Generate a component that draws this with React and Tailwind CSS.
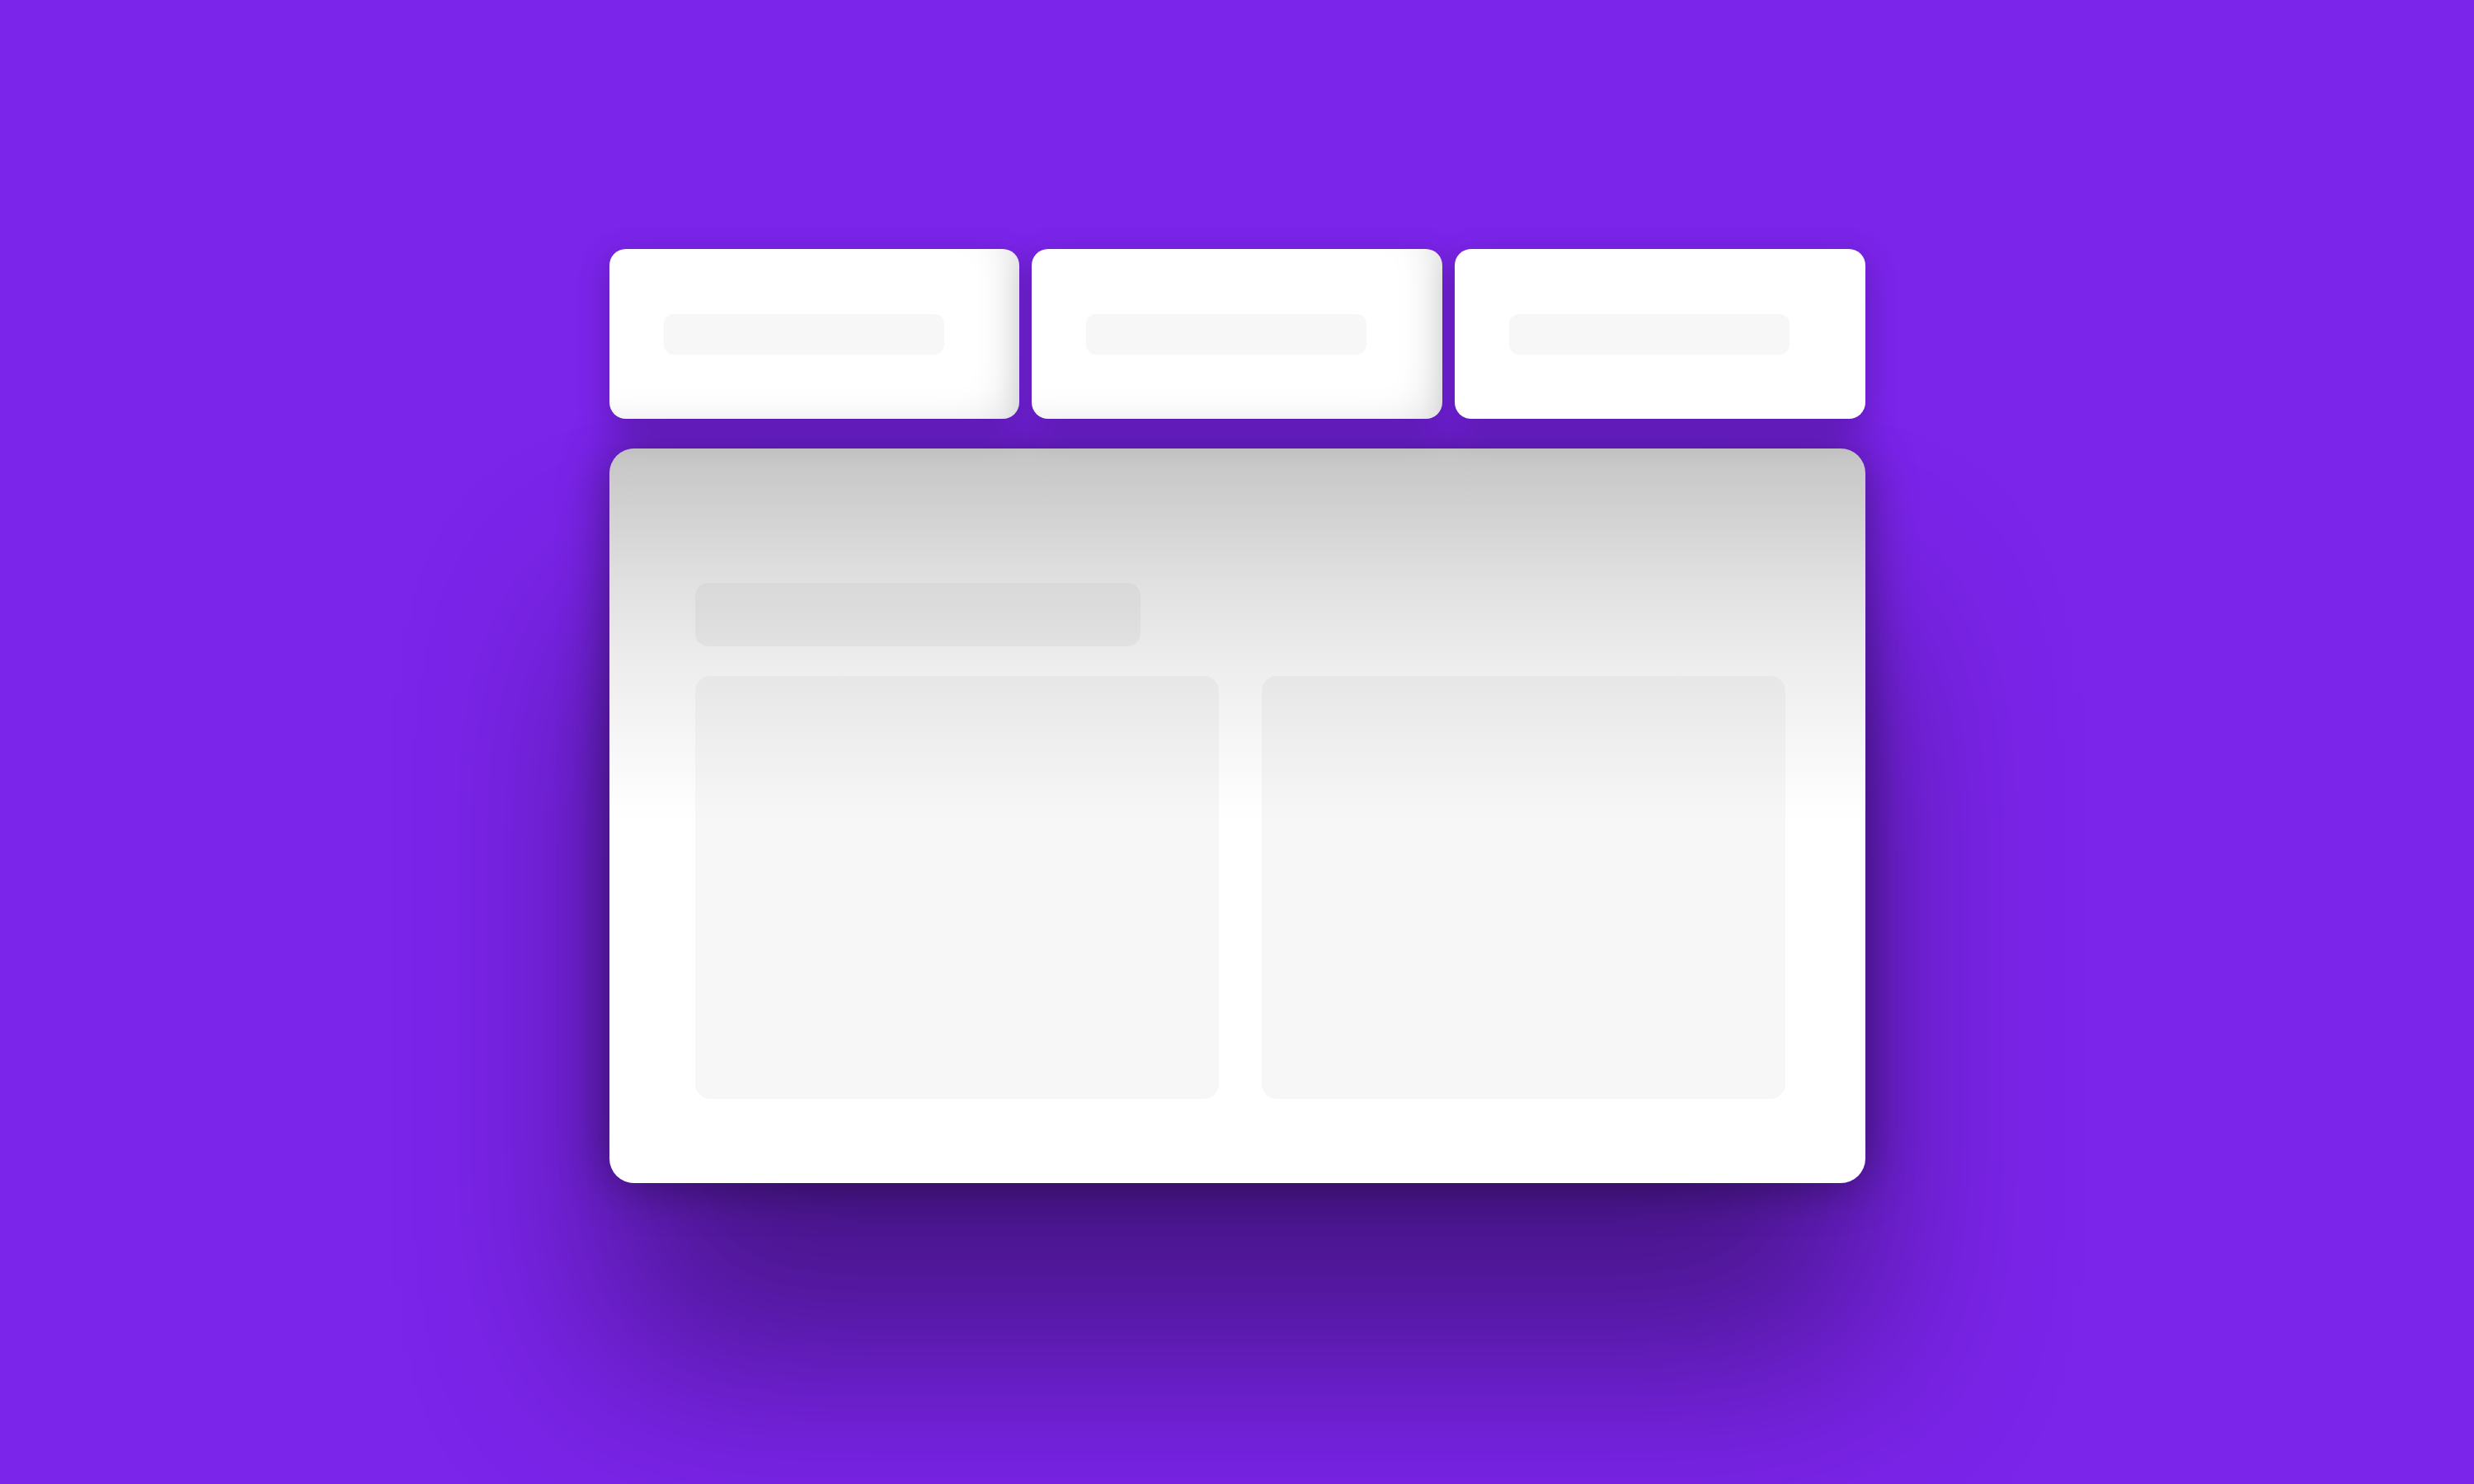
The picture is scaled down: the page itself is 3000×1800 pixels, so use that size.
export default function App() {
  // Three tab cards above the main panel; the first two carry a soft inner shade on their right edge.
  const tabClasses = [
    "flex h-[206px] flex-1 items-center rounded-[20px] bg-white pl-[66px] shadow-[inset_-34px_-16px_50px_-26px_rgba(0,0,0,0.13),0_12px_40px_rgba(0,0,0,0.24)]",
    "flex h-[206px] flex-1 items-center rounded-[20px] bg-white pl-[66px] shadow-[inset_-34px_-16px_50px_-26px_rgba(0,0,0,0.13),0_12px_40px_rgba(0,0,0,0.24)]",
    "flex h-[206px] flex-1 items-center rounded-[20px] bg-white pl-[66px] shadow-[0_12px_40px_rgba(0,0,0,0.24)]",
  ];

  return (
    <div className="h-[1800px] w-full overflow-hidden bg-[#7b24ea]">
      <div className="mx-auto w-[1523px] pt-[302px]">
        <div className="flex gap-[15px]">
          {tabClasses.map((cls, i) => (
            <div key={i} className={cls}>
              <div className="h-[49px] w-[340px] rounded-[12px] bg-[#f7f7f7]" />
            </div>
          ))}
        </div>

        {/* Main panel: shaded from the top edge down, placeholders are translucent so the shade shows through */}
        <div className="mt-[36px] rounded-[30px] bg-[linear-gradient(to_bottom,#c5c5c5_0px,#cfcfcf_60px,#e0e0e0_160px,#ececec_250px,#f6f6f6_350px,#ffffff_450px)] pb-[102px] pl-[104px] pr-[97px] pt-[163px] shadow-[0_0_60px_rgba(0,0,0,0.45),0_210px_240px_rgba(0,0,0,0.42)]">
          <div className="h-[77px] w-[540px] rounded-[16px] bg-[rgba(0,0,0,0.035)]" />
          <div className="mt-[36px] grid grid-cols-2 gap-[52px]">
            <div className="h-[513px] rounded-[18px] bg-[rgba(0,0,0,0.03)]" />
            <div className="h-[513px] rounded-[18px] bg-[rgba(0,0,0,0.03)]" />
          </div>
        </div>
      </div>
    </div>
  );
}
